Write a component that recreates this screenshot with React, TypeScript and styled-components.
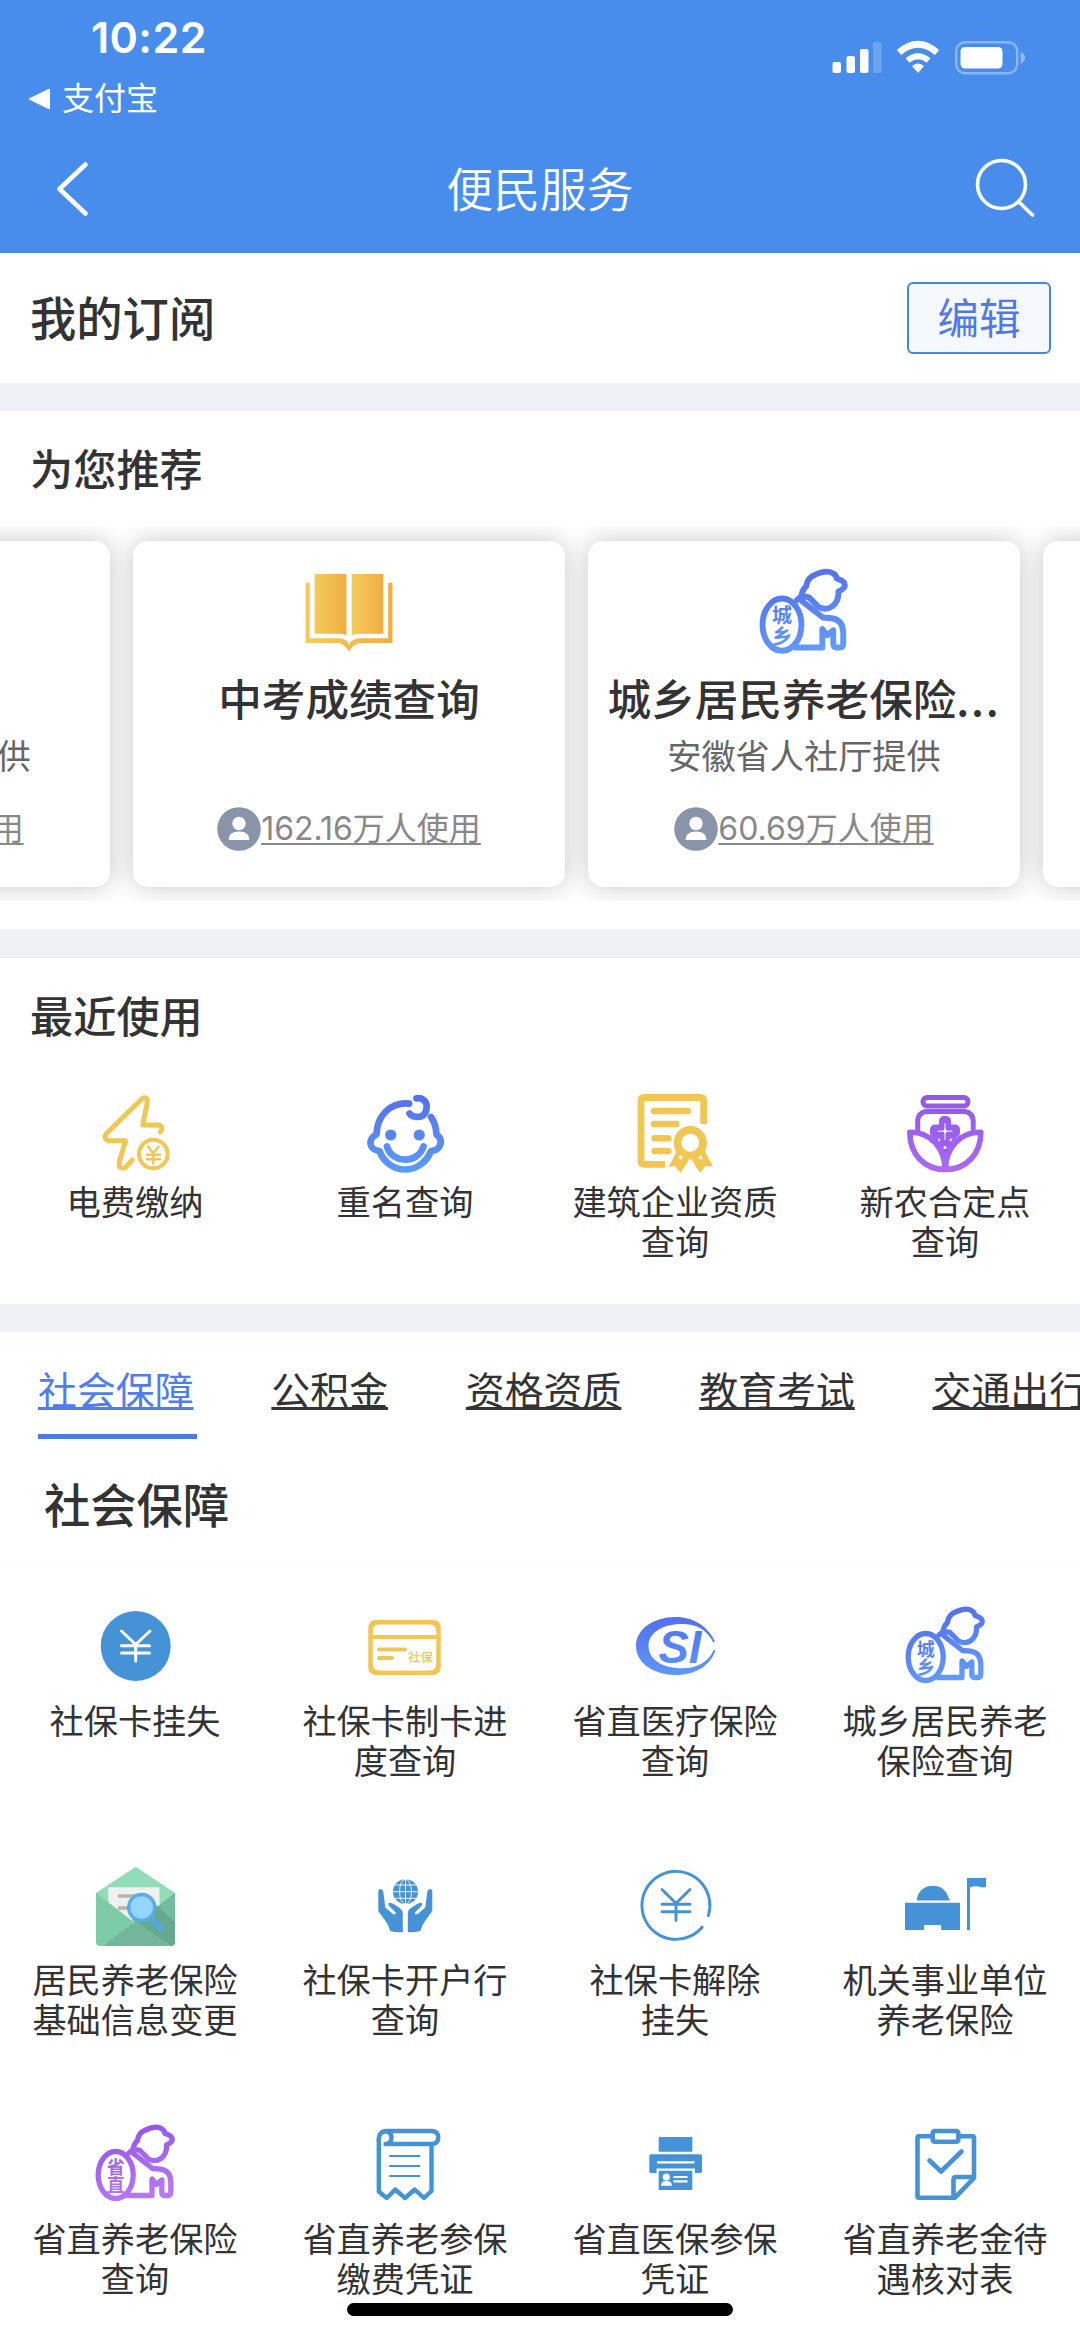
import React from 'react';
import styled, { createGlobalStyle } from 'styled-components';

const GlobalStyle = createGlobalStyle`
  * { box-sizing: border-box; }
  body {
    margin: 0;
    background: #fff;
    color: #333;
    font-family: Inter, 'Noto Sans CJK SC', sans-serif;
  }
`;

const Page = styled.main`
  position: relative;
  width: 1080px;
  height: 2337px;
  overflow: hidden;
  background: #fff;
`;

/* ---------- header ---------- */

const Header = styled.header`
  height: 253px;
  display: flex;
  flex-direction: column;
  background: #498dec;
  border-bottom: 2px solid #4a8bdf;
  color: #fff;
`;

const StatusBar = styled.div`
  height: 127px;
  display: flex;
  justify-content: space-between;
  padding: 12px 54px 0 28px;
`;

const StatusLeft = styled.div`
  display: flex;
  flex-direction: column;
`;

const Clock = styled.div`
  height: 50px;
  line-height: 50px;
  padding-left: 63px;
  font-size: 43px;
  font-weight: 600;
  letter-spacing: 0.4px;
`;

const BackToApp = styled.div`
  margin-top: 15px;
  height: 44px;
  line-height: 44px;
  display: flex;
  align-items: center;
  gap: 11px;
  font-size: 32px;
`;

const StatusIcons = styled.div`
  padding-top: 27px;
  display: flex;
  align-items: flex-start;
`;

const NavBar = styled.nav`
  height: 126px;
  display: grid;
  grid-template-columns: 140px 1fr 140px;
  align-items: center;
`;

const NavSide = styled.div<{ $right?: boolean }>`
  display: flex;
  padding: ${(p) => (p.$right ? '0 43px 0 0' : '0 0 0 53px')};
  justify-content: ${(p) => (p.$right ? 'flex-end' : 'flex-start')};
`;

const NavTitle = styled.h1`
  margin: 2px 0 0;
  text-align: center;
  font-size: 46.8px;
  font-weight: 350;
  line-height: 60px;
`;

/* ---------- sections ---------- */

const Section = styled.section<{ $height: number }>`
  height: ${(p) => p.$height}px;
  background: #fff;
`;

const Divider = styled.div<{ $height?: number }>`
  height: ${(p) => p.$height ?? 28}px;
  background: #eef1f5;
`;

const TitleRow = styled.div<{ $height: number; $indent?: number }>`
  height: ${(p) => p.$height}px;
  display: flex;
  align-items: center;
  justify-content: space-between;
  padding: 0 29px 0 ${(p) => p.$indent ?? 30}px;
`;

const Title = styled.h2<{ $size?: number }>`
  margin: 0;
  padding-top: 1px;
  font-size: ${(p) => p.$size ?? 43.2}px;
  line-height: 60px;
  font-weight: 500;
`;

const EditButton = styled.button`
  width: 144px;
  height: 72px;
  padding: 1px 0 0;
  border: 2px solid #4388dc;
  border-radius: 6px;
  background: #f5f9fd;
  color: #4f78ea;
  font: inherit;
  font-size: 41.5px;
  line-height: 60px;
`;

/* ---------- recommendation cards ---------- */

const Carousel = styled.div`
  height: 374px;
  overflow: hidden;
  padding-top: 14px;
`;

const CardTrack = styled.div`
  display: flex;
  gap: 23px;
  width: max-content;
  margin-left: -322px;
`;

const Card = styled.article`
  width: 432px;
  height: 346px;
  border-radius: 15px;
  background: #fff;
  box-shadow: 0 0 26px rgba(0, 0, 0, 0.22);
  display: flex;
  flex-direction: column;
  align-items: center;
  padding-top: 27px;
`;

const CardTitle = styled.h3`
  margin: 9px 0 0;
  height: 60px;
  line-height: 60px;
  font-size: 43.6px;
  font-weight: 500;
  white-space: nowrap;
  font-family: 'Noto Sans CJK SC', sans-serif;
`;

const Ellipsis = styled.span`
  letter-spacing: 1.7px;
`;

const CardSource = styled.div`
  height: 48px;
  line-height: 48px;
  margin-top: 6px;
  font-size: 34.2px;
  color: #666;
`;

const CardUsers = styled.div`
  display: flex;
  align-items: center;
  height: 44px;
  margin-top: 26px;
  font-size: 32px;
  line-height: 44px;
  color: #888;
  white-space: nowrap;
`;

const Count = styled.span`
  text-decoration: underline;
  text-decoration-thickness: 2px;
  text-underline-offset: 3px;
  text-decoration-skip-ink: none;
`;

/* ---------- service grid ---------- */

const Grid = styled.div<{ $top: number }>`
  display: grid;
  grid-template-columns: repeat(4, 270px);
  grid-auto-rows: 259px;
  padding-top: ${(p) => p.$top}px;
`;

const Service = styled.div`
  display: flex;
  flex-direction: column;
  align-items: center;
`;

const Glyph = styled.svg.attrs<{ viewBox?: string }>((p) => ({ viewBox: p.viewBox ?? '0 0 90 90' }))`
  width: 90px;
  height: 90px;
  flex: none;
  overflow: visible;
  fill: none;
  stroke-linecap: round;
  stroke-linejoin: round;
  font-family: 'Noto Sans CJK SC', sans-serif;
`;

const Label = styled.div<{ $gap: number }>`
  margin-top: ${(p) => p.$gap}px;
  font-family: 'Noto Sans CJK SC', sans-serif;
  font-size: 34.2px;
  line-height: 40px;
  text-align: center;
  white-space: pre-line;
`;

/* ---------- tabs ---------- */

const Tabs = styled.div`
  height: 107px;
  display: flex;
  gap: 77.8px;
  padding: 31px 0 0 38px;
  overflow: hidden;
`;

const Tab = styled.div<{ $active?: boolean }>`
  flex: none;
  position: relative;
  height: 76px;
  font-family: 'Noto Sans CJK SC', sans-serif;
  font-size: 38.9px;
  line-height: 50px;
  color: ${(p) => (p.$active ? '#4f7cf0' : '#333')};
  text-decoration: underline;
  text-decoration-thickness: 3px;
  text-underline-offset: 2px;
  text-decoration-skip-ink: none;
  &::after {
    content: '';
    display: ${(p) => (p.$active ? 'block' : 'none')};
    position: absolute;
    left: 0;
    bottom: 0;
    width: 159px;
    height: 5px;
    background: #4f78ea;
  }
`;

const CategoryHead = styled.div`
  height: 123px;
  display: flex;
  align-items: center;
  padding: 10px 0 0 44px;
  border-bottom: 1px solid #fafafa;
`;

const HomeIndicator = styled.div`
  position: absolute;
  left: 347px;
  top: 2303px;
  width: 386px;
  height: 13px;
  border-radius: 7px;
  background: #000;
`;

/* ---------- icons ---------- */

const YELLOW = '#f1c655';
const BLUE = '#4692d6';

const BookIcon = () => (
  <Glyph>
    <defs>
      <linearGradient id="bk" x1="0" x2="1">
        <stop offset="0" stopColor="#f4cb5c" />
        <stop offset="1" stopColor="#f0ae44" />
      </linearGradient>
    </defs>
    <path d="M10.500 6h32v62q-2-2.300-6-2.300h-26z" fill="url(#bk)" />
    <path d="M47.700 6h31.600v59.700H54q-4 0-6.300 2.300z" fill="url(#bk)" />
    <path d="M1.500 14.700H5.800V70.300H35.500Q43 71 45 76.500 47.500 71 55 70.300H84.200V14.700H88.500V75H57Q50 75 45 83.700 40 75 33 75H1.500z" fill="url(#bk)" />
  </Glyph>
);

type ElderProps = { id: string; from: string; to: string; top: string; bottom: string; viewBox?: string };

const ElderIcon = ({ id, from, to, top, bottom, viewBox }: ElderProps) => (
  <Glyph viewBox={viewBox}>
    <defs>
      <linearGradient id={id} gradientUnits="userSpaceOnUse" x1="30" y1="8" x2="50" y2="82">
        <stop offset="0" stopColor={from} />
        <stop offset="1" stopColor={to} />
      </linearGradient>
    </defs>
    <g stroke={`url(#${id})`} strokeWidth="5.300">
      <ellipse cx="25.700" cy="56" rx="17.500" ry="23.500" />
      <path d="M39 34l4-3.500q1-6 4.500-9 1-8 8-10.500 11-5 16.500-1 2.500 1.500 3 4.500 6 2 7 4.500 1.500 4-5.500 7 .5 9-5.500 13.500-6 4-12.500.5L50 31.500q-3.500-1.500-7 .5" />
      <path d="M44 35l18.500 14.500 8 .7q10 1.500 10.300 13V73q0 3.500-3 3.500h-3q-3 0-3-3.500V61l-5.500 4.500L62 60v16.500H38" />
    </g>
    <g fill={`url(#${id})`} fontSize="18" fontWeight="700" textAnchor="middle">
      <text x="25.700" y="54.500">{top}</text>
      <text x="25.700" y="73">{bottom}</text>
    </g>
  </Glyph>
);

const PowerIcon = () => (
  <Glyph stroke={YELLOW} strokeWidth="5">
    <path d="M70.500 44q3.500-6-2-7H52.700l4.500-22q1-7-5-4.500L16 46q-3 5 2.500 6.700H35.500L29.300 74q-1 8 6 5.500l7-7.500" />
    <circle cx="63.300" cy="66" r="14.300" strokeWidth="4" />
    <path d="M58 58.500l5.300 7 5.300-7M63.300 66v9.500M57 66.700h13M57 71.200h13" strokeWidth="2.400" />
  </Glyph>
);

const BabyIcon = () => (
  <Glyph stroke="url(#bb)" strokeWidth="6.700">
    <defs>
      <linearGradient id="bb" gradientUnits="userSpaceOnUse" x1="0" y1="8" x2="0" y2="84">
        <stop offset="0" stopColor="#5570ec" />
        <stop offset="1" stopColor="#5b9bf8" />
      </linearGradient>
    </defs>
    <path d="M49 15.600C31 14 17 27 16.500 46.500c-9 4-8 15.500 3 16.500 4 11 14 18.500 25.500 18.500S67 74 71 63c10-1 13-11 5.500-16.500Q76 36 71 29" />
    <path d="M56.500 10.300c7-.8 10.500 4 10.200 9-.5 7.500-5 10-10 9.600-3-.2-6-1.500-7.200-3.400" />
    <path d="M27 58.500C32 76 58 76 63.500 58.500" />
    <g fill="url(#bb)" stroke="none">
      <circle cx="30.700" cy="47" r="5.600" />
      <circle cx="59.300" cy="47" r="5.600" />
    </g>
  </Glyph>
);

const CertificateIcon = () => (
  <Glyph stroke={YELLOW} strokeWidth="6.800">
    <path d="M73.700 36V13q0-3.500-3.500-3.500h-56Q11 9.500 11 13v60q0 3.300 3.300 3.300H35" strokeLinecap="butt" />
    <path d="M24 23h34M24 36h22.500M24.500 50.300h14M24.500 63h14" strokeWidth="6.400" strokeLinecap="round" />
    <circle cx="60.300" cy="54.700" r="12.800" strokeWidth="7.600" />
    <path d="M47.500 62L38.500 79l6.500-1 5.700 7L60.300 69.500 70 85l5.700-7 7.500.500L74 62l-6 6H52z" fill={YELLOW} stroke="none" />
    <path d="M50.700 67l2.300 2.500-2.300 2.500-2.300-2.500zM70.500 67l2.300 2.500-2.300 2.500-2.300-2.500z" fill="#fff" stroke="none" />
  </Glyph>
);

const HerbIcon = () => (
  <Glyph stroke="url(#hb)" strokeWidth="5">
    <defs>
      <linearGradient id="hb" gradientUnits="userSpaceOnUse" x1="0" y1="8" x2="0" y2="84">
        <stop offset="0" stopColor="#8f58ea" />
        <stop offset="1" stopColor="#ae68f5" />
      </linearGradient>
    </defs>
    <rect x="23" y="9.500" width="45" height="8.500" rx="4" />
    <path d="M17.700 42V32q1-7 8-8.500h39.500q7 1.500 8 8.500v10" />
    <g fill="#9a5fee" stroke="none">
      <rect x="39" y="28" width="12" height="30" rx="5" />
      <rect x="30" y="36.500" width="30" height="13" rx="5" />
      <path d="M33 48l12 26 12-26z" />
    </g>
    <path d="M45 35.500v16M38 43.200h14" stroke="#fff" strokeWidth="1" />
    <path d="M45 40l1 2.200 2.200 1-2.200 1L45 46.400l-1-2.200-2.200-1 2.200-1zM37.500 50.500l3 .5-1 3zM52.500 50.500l-3 .5 1 3z" fill="#fff" stroke="none" />
    <circle cx="45" cy="59.500" r="1.500" fill="#fff" stroke="none" />
    <path d="M9.800 44.300C31 44 45 60 45 81.500 24 81.500 9.800 66 9.800 44.300z" fill="#fff" strokeWidth="5.600" />
    <path d="M80.800 44.300C59.500 44 45.500 60 45.500 81.500 66.500 81.500 80.800 66 80.800 44.300z" fill="#fff" strokeWidth="5.600" />
  </Glyph>
);

const YenSolidIcon = () => (
  <Glyph>
    <circle cx="45.700" cy="45" r="35" fill={BLUE} />
    <path d="M31.500 30l14.200 13.500L60 30M45.700 43.500v16.500M31.500 44.700h28M31.500 52h28" stroke="#fff" strokeWidth="3" />
  </Glyph>
);

const CardIcon = () => (
  <Glyph stroke={YELLOW} strokeWidth="4.500">
    <rect x="10.500" y="21.200" width="68" height="50.500" rx="5" />
    <path d="M10.500 36h68" strokeWidth="4" />
    <path d="M11.500 28.500q0-6 6-6.500M77.500 28.500q0-6-6-6.500M11.500 64.500q0 6 6 6.500M77.500 64.500q0 6-6 6.500" strokeWidth="3.500" />
    <path d="M19 48.500h26M19 57h13" strokeWidth="4" />
    <text x="60.500" y="60.500" fontSize="12.500" fontWeight="500" fill={YELLOW} stroke="none" textAnchor="middle">社保</text>
  </Glyph>
);

const InsuranceIcon = () => (
  <Glyph>
    <defs>
      <linearGradient id="si" gradientUnits="userSpaceOnUse" x1="0" y1="15" x2="0" y2="75">
        <stop offset="0" stopColor="#536eee" />
        <stop offset="1" stopColor="#5d98f8" />
      </linearGradient>
    </defs>
    <path fill="url(#si)" d="M85 40.500C78 25 63 16 46 16 23 16 6 28.500 6 45s17 29 40 29c19 0 34-9 39.500-24.500l-1.800-.5C78 61.500 67 67.300 52 67.300 32 67.300 18.500 58 18.500 45S32 23 52 23c14 0 24.500 5 31.300 18.500z" />
    <text
      x="28.500"
      y="61.500"
      textLength="43"
      lengthAdjust="spacingAndGlyphs"
      fill="url(#si)"
      fontFamily="Liberation Sans, sans-serif"
      fontStyle="italic"
      fontWeight="700"
      fontSize="47"
    >
      SI
    </text>
  </Glyph>
);

const MailSearchIcon = () => (
  <Glyph>
    <path d="M6 33L45.700 6.700 85 33v30H6z" fill="#92dcba" />
    <path d="M18.300 27.300h51.200V66H18.300z" fill="#eff1f1" />
    <path d="M28 36h20M28 48h14" stroke="#b9b2a8" strokeWidth="3.600" strokeLinecap="butt" />
    <path d="M6 32.700l40 31 39-31V82q0 4-4 4H10q-4 0-4-4z" fill="#7ecba8" />
    <path d="M62 51l23-18.300V82q0 3-3 4L49 62z" fill="#72bd9d" />
    <path d="M64 43l21 19v20q-1 4-4 4L42 60z" fill="#65aa8f" />
    <path d="M13 86l33-25 34 25z" fill="#73b79b" />
    <path d="M62 59.500l10.500 10" stroke="#55a6e0" strokeWidth="6.500" strokeLinecap="butt" />
    <circle cx="51.700" cy="47.500" r="13" fill="#93d5fb" stroke="#5aabe6" strokeWidth="3.400" />
  </Glyph>
);

const hand = 'M18.300 31q.3-2 2.200-2 2 0 2.800 2.500l2 16 7.500 6.500q2.500 1.300 3-.8-.2-1.300-5-5.400-3.500-3.300-1.800-4.700 1.500-1 5 1.200l6 4q2.800 2 2.800 5.500V72.300q-7 .3-12.500-1.300-1.500-6-5.500-11l-6.500-9z';

const GlobeHandsIcon = () => (
  <Glyph>
    <circle cx="45.500" cy="31.700" r="12.500" fill={BLUE} />
    <g stroke="#fff" strokeWidth="0.900">
      <ellipse cx="45.500" cy="31.700" rx="6" ry="12.500" />
      <path d="M45.500 19v25.500M33 31.700h25M35 25h21M35 38.300h21" />
    </g>
    <path d={hand} fill={BLUE} />
    <path d={hand} fill={BLUE} transform="translate(90.600 0) scale(-1 1)" />
  </Glyph>
);

const YenOpenIcon = () => (
  <Glyph stroke={BLUE} strokeWidth="2.900">
    <path d="M78.400 55.500A34 34 0 1 0 72.200 67" />
    <path d="M32 29.500l14 13.800 14-13.800M46 43.300V60.500M32 44.200h28M32 51.800h28" />
  </Glyph>
);

const InstitutionIcon = () => (
  <Glyph>
    <g fill={BLUE}>
      <path d="M5 42.700h55V70H41.200v-5H24v5H5z" />
      <path d="M16.700 40.500C18 30 25 25.700 33 25.700S46.500 30 48.500 38l2 2.500z" />
      <path d="M67 18h19v9q-3.500 1.200-7-.500-5-.8-9 1V70h-3z" />
    </g>
  </Glyph>
);

const ReceiptIcon = () => (
  <Glyph stroke={BLUE} strokeWidth="4.400">
    <path d="M18.800 20v52.500l8 6.500L35.200 70.500 45 79l9.700-8.500L64 79l7.500-7V27" />
    <path d="M18.800 22q-.5-10 8-10h45q6.500.5 6.500 6.500T72 25H25.500q6-.5 6-6.500T25.500 12.500" />
    <path d="M30 37h29.500M30 47h29.500M30 57h29.500" strokeWidth="2.200" />
  </Glyph>
);

const PrinterIcon = () => (
  <Glyph>
    <g fill={BLUE}>
      <path d="M28.700 18h33.600v14.700H28.700zM28.700 51.700h33.600V71H28.700z" />
      <path d="M21 35.300h49.300q1.700 0 1.700 1.700v15.300q0 1.700-1.700 1.700H65v-4.500H26.500V54H21q-1.700 0-1.700-1.700V37q0-1.700 1.700-1.700z" />
    </g>
    <path d="M27 43.300h37.500M43.500 58h14M43.500 62.300h14" stroke="#fff" strokeWidth="2.200" strokeLinecap="butt" />
    <circle cx="36.300" cy="58" r="3.600" fill="#fff" />
    <path d="M31 66.700q0-5 5.300-5t5.700 5z" fill="#fff" />
  </Glyph>
);

const ClipboardIcon = () => (
  <Glyph stroke={BLUE} strokeWidth="4.600">
    <path d="M31.500 17.300H19q-1.500 0-1.500 1.500v58.400q0 1.500 1.500 1.500h36L74 59V18.800q0-1.500-1.500-1.500H59" />
    <rect x="32.700" y="12" width="25.600" height="10.700" rx="2" />
    <path d="M29.500 41.500L41 52.500 61.500 32.500M53.500 77V60.500q0-2.500 2.500-2.500h17" />
  </Glyph>
);

const UserBadge = () => (
  <svg width="44" height="44" viewBox="0 0 44 44">
    <circle cx="22" cy="22" r="21.800" fill="#8a94a8" />
    <circle cx="22" cy="16.500" r="6.700" fill="#fff" />
    <path d="M11.500 33q0-8.500 10.500-8.500T32.500 33z" fill="#fff" />
  </svg>
);

/* ---------- content ---------- */

const cards = [
  { icon: null, title: '', source: '安徽省人社厅提供', users: '80.69万人使用' },
  { icon: <BookIcon />, title: '中考成绩查询', source: '', users: '162.16万人使用' },
  {
    icon: <ElderIcon id="e1" from="#536cf0" to="#629cfb" top="城" bottom="乡" viewBox="5 5 81 81" />,
    title: '城乡居民养老保险',
    clipped: true,
    source: '安徽省人社厅提供',
    users: '60.69万人使用',
  },
  { icon: null, title: '', source: '', users: '' },
];

const recent = [
  { icon: <PowerIcon />, label: '电费缴纳' },
  { icon: <BabyIcon />, label: '重名查询' },
  { icon: <CertificateIcon />, label: '建筑企业资质\n查询' },
  { icon: <HerbIcon />, label: '新农合定点\n查询' },
];

const tabs = ['社会保障', '公积金', '资格资质', '教育考试', '交通出行'];

const services = [
  { icon: <YenSolidIcon />, label: '社保卡挂失' },
  { icon: <CardIcon />, label: '社保卡制卡进\n度查询' },
  { icon: <InsuranceIcon />, label: '省直医疗保险\n查询' },
  { icon: <ElderIcon id="e2" from="#536cf0" to="#629cfb" top="城" bottom="乡" />, label: '城乡居民养老\n保险查询' },
  { icon: <MailSearchIcon />, label: '居民养老保险\n基础信息变更' },
  { icon: <GlobeHandsIcon />, label: '社保卡开户行\n查询' },
  { icon: <YenOpenIcon />, label: '社保卡解除\n挂失' },
  { icon: <InstitutionIcon />, label: '机关事业单位\n养老保险' },
  { icon: <ElderIcon id="e3" from="#9455ea" to="#b878f8" top="省" bottom="直" />, label: '省直养老保险\n查询' },
  { icon: <ReceiptIcon />, label: '省直养老参保\n缴费凭证' },
  { icon: <PrinterIcon />, label: '省直医保参保\n凭证' },
  { icon: <ClipboardIcon />, label: '省直养老金待\n遇核对表' },
];

export default function App() {
  return (
    <Page>
      <GlobalStyle />
      <Header>
        <StatusBar>
          <StatusLeft>
            <Clock>10:22</Clock>
            <BackToApp>
              <svg width="23" height="22" viewBox="0 0 23 22">
                <path d="M1 11L21.500 1v20z" fill="#fff" stroke="#fff" strokeLinejoin="round" />
              </svg>
              支付宝
            </BackToApp>
          </StatusLeft>
          <StatusIcons>
            <svg width="196" height="38" viewBox="830 39 196 38" fill="#fff">
              <rect x="832.500" y="62" width="8.500" height="11" rx="2" />
              <rect x="846.500" y="56" width="8.500" height="17" rx="2" />
              <rect x="860" y="49" width="8.500" height="24" rx="2" />
              <rect x="873" y="42" width="8.500" height="31" rx="2" opacity=".2" />
              <path d="M918 73l-6-7q6-5 12 0z" />
              <path d="M907.500 60.500q10.500-8.500 21 0" fill="none" stroke="#fff" strokeWidth="6" />
              <path d="M899 52.500q19-16.500 38 0" fill="none" stroke="#fff" strokeWidth="6.600" />
              <rect x="956.200" y="42.200" width="61" height="31" rx="9" fill="none" stroke="#fff" strokeOpacity=".36" strokeWidth="2.400" />
              <rect x="960.500" y="47" width="42" height="21.500" rx="4.500" />
              <path d="M1020.500 52q4.500 1.500 4.500 5.700t-4.500 5.800z" opacity=".4" />
            </svg>
          </StatusIcons>
        </StatusBar>
        <NavBar>
          <NavSide>
            <svg width="40" height="60" viewBox="53 160 40 60" fill="none">
              <path d="M85.500 165.500L59.500 190l26 24.500" stroke="#fff" strokeWidth="4.600" strokeLinecap="round" strokeLinejoin="round" />
            </svg>
          </NavSide>
          <NavTitle>便民服务</NavTitle>
          <NavSide $right>
            <svg width="64" height="64" viewBox="973 158 64 64" fill="none" stroke="#fff" strokeWidth="3.600" strokeLinecap="round">
              <circle cx="1001.500" cy="185.500" r="24" />
              <path d="M1018.500 202.500l14 13.500" />
            </svg>
          </NavSide>
        </NavBar>
      </Header>

      <Section $height={130}>
        <TitleRow $height={130}>
          <Title $size={46.3}>我的订阅</Title>
          <EditButton>编辑</EditButton>
        </TitleRow>
      </Section>
      <Divider />

      <Section $height={518}>
        <TitleRow $height={116}>
          <Title>为您推荐</Title>
        </TitleRow>
        <Carousel>
          <CardTrack>
            {cards.map((c, i) => (
              <Card key={i}>
                {c.icon ?? <Glyph />}
                <CardTitle>
                  {c.title}
                  {c.clipped && <Ellipsis>...</Ellipsis>}
                </CardTitle>
                <CardSource>{c.source}</CardSource>
                {c.users && (
                  <CardUsers>
                    <UserBadge />
                    <Count>{c.users}</Count>
                  </CardUsers>
                )}
              </Card>
            ))}
          </CardTrack>
        </Carousel>
      </Section>
      <Divider $height={29} />

      <Section $height={346}>
        <TitleRow $height={116}>
          <Title>最近使用</Title>
        </TitleRow>
        <Grid $top={14}>
          {recent.map((s) => (
            <Service key={s.label}>
              {s.icon}
              <Label $gap={2}>{s.label}</Label>
            </Service>
          ))}
        </Grid>
      </Section>
      <Divider />

      <Tabs>
        {tabs.map((t, i) => (
          <Tab key={t} $active={i === 0}>
            {t}
          </Tab>
        ))}
      </Tabs>
      <CategoryHead>
        <Title $size={46.3}>社会保障</Title>
      </CategoryHead>
      <Grid $top={39}>
        {services.map((s) => (
          <Service key={s.label}>
            {s.icon}
            <Label $gap={8}>{s.label}</Label>
          </Service>
        ))}
      </Grid>
      <HomeIndicator />
    </Page>
  );
}
